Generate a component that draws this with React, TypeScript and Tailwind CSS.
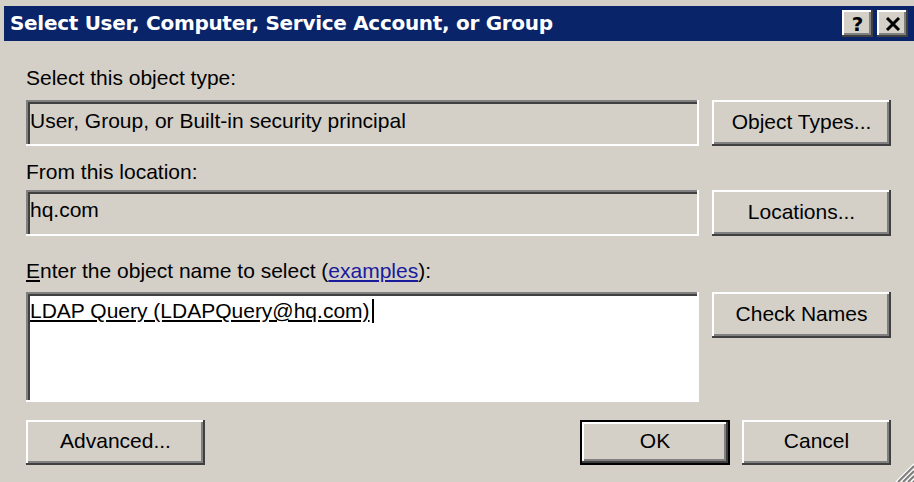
const raised =
  'shadow-[inset_-2px_-2px_#404040,inset_2px_2px_#ffffff,inset_-4px_-4px_#808080]';
const sunken =
  'shadow-[inset_-2px_-2px_#ffffff,inset_2px_2px_#808080,inset_4px_4px_#404040]';

function Button({ label, className = '' }: { label: React.ReactNode; className?: string }) {
  return (
    <button
      className={`flex items-center justify-center bg-[#d4d0c8] pb-[3px] text-[21px] leading-[24px] text-black ${raised} ${className}`}
    >
      {label}
    </button>
  );
}

function TitleButton({ children }: { children: React.ReactNode }) {
  return (
    <div
      className={`flex h-[27px] w-[31px] items-center justify-center bg-[#d4d0c8] ${raised}`}
    >
      {children}
    </div>
  );
}

export default function App() {
  return (
    <div
      className="relative h-[482px] w-[914px] overflow-hidden bg-[#d4d0c8] pt-[6px] pl-[4px] text-black"
      style={{ fontFamily: '"Liberation Sans", Arial, sans-serif' }}
    >
      {/* title bar */}
      <div className="flex h-[35px] items-center justify-between bg-[#0a246a] pl-[6px] pr-[6px]">
        <span className="pb-[1px] font-['DejaVu_Sans',sans-serif] text-[20px] font-bold leading-[24px] tracking-[-0.3px] text-white">
          Select User, Computer, Service Account, or Group
        </span>
        <div className="flex gap-[4px]">
          <TitleButton>
            <span className="font-['DejaVu_Sans',sans-serif] text-[20px] font-bold leading-none">?</span>
          </TitleButton>
          <TitleButton>
            <svg width="16" height="14" viewBox="0 0 16 14">
              <path d="M2 1 L14 13 M14 1 L2 13" stroke="#000" strokeWidth="3" />
            </svg>
          </TitleButton>
        </div>
      </div>

      <div className="pl-[22px] text-[21px] leading-[24px]">
        <div className="mt-[25px] h-[24px]">Select this object type:</div>
        <div className="mt-[10px] flex gap-[13px]">
          <div className={`h-[46px] w-[673px] bg-[#d4d0c8] pl-[4px] pt-[9px] ${sunken}`}>
            User, Group, or Built-in security principal
          </div>
          <Button label="Object Types..." className="h-[46px] w-[179px]" />
        </div>

        <div className="mt-[14px] h-[24px]">From this location:</div>
        <div className="mt-[6px] flex gap-[13px]">
          <div className={`h-[46px] w-[673px] bg-[#d4d0c8] pl-[4px] pt-[8px] ${sunken}`}>
            hq.com
          </div>
          <Button label="Locations..." className="h-[46px] w-[179px]" />
        </div>

        <div className="mt-[23px] h-[24px]">
          <span className="underline">E</span>nter the object name to select (
          <span className="text-[#1a1a9c] underline">examples</span>):
        </div>
        <div className="mt-[9px] flex items-start gap-[13px]">
          <div className={`h-[110px] w-[673px] bg-white pl-[4px] pt-[7px] ${sunken}`}>
            <span className="underline">LDAP Query (LDAPQuery@hq.com)</span>
            <span className="ml-[2px] inline-block h-[24px] w-[2px] bg-black align-top" />
          </div>
          <Button label="Check Names" className="h-[46px] w-[179px]" />
        </div>

        <div className="mt-[18px] flex">
          <Button label="Advanced..." className="h-[45px] w-[179px]" />
          <div className="ml-[375px] flex gap-[12px]">
            <div className="h-[45px] w-[150px] bg-black p-[2px]">
              <Button label="OK" className="h-full w-full" />
            </div>
            <Button label="Cancel" className="h-[45px] w-[149px]" />
          </div>
        </div>
      </div>

      {/* resize grip */}
      <svg
        className="absolute bottom-0 right-0"
        width="22"
        height="22"
        viewBox="0 0 22 22"
      >
        {[0, 5, 10, 15].map((o) => (
          <g key={o}>
            <path d={`M${22 - (18 - o)} 22 L22 ${22 - (18 - o)}`} stroke="#ffffff" strokeWidth="1.5" />
            <path d={`M${22 - (16 - o)} 22 L22 ${22 - (16 - o)}`} stroke="#808080" strokeWidth="2" />
          </g>
        ))}
      </svg>
    </div>
  );
}
